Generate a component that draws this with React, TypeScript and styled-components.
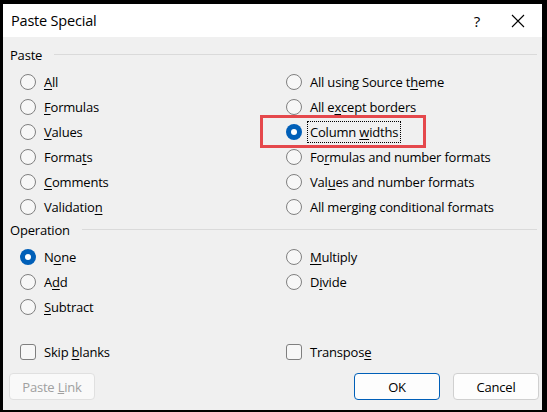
import React from "react";
import styled, { createGlobalStyle } from "styled-components";

const GlobalStyle = createGlobalStyle`
  html, body {
    margin: 0;
    padding: 0;
    background: #000;
  }
  body {
    font-family: "Open Sans", "Noto Sans", sans-serif;
  }
`;

const Window = styled.div`
  box-sizing: border-box;
  width: 547px;
  height: 412px;
  border-style: solid;
  border-color: #000;
  border-width: 4px 5px 2px 3px;
  display: flex;
  flex-direction: column;
  background: #f0f0f0;
  color: #000;
  font-size: 13px;
  letter-spacing: -0.2px;
`;

const TitleBar = styled.div`
  height: 33px;
  flex: none;
  background: #fff;
  display: flex;
  align-items: center;
  padding-left: 8px;
`;

const Title = styled.div`
  flex: 1;
  font-size: 14.5px;
  letter-spacing: -0.2px;
  color: #000;
`;

const TitleButton = styled.div<{ $w: number }>`
  width: ${(p) => p.$w}px;
  height: 33px;
  display: flex;
  align-items: center;
  justify-content: center;
  font-size: 15px;
  color: #000;
`;

const Body = styled.div`
  flex: 1;
  display: flex;
  flex-direction: column;
  padding: 7px 5px 0 7px;
`;

const GroupHeader = styled.div<{ $mt?: number }>`
  height: 21px;
  display: flex;
  align-items: center;
  gap: 12px;
  margin-top: ${(p) => p.$mt ?? 0}px;
  &::after {
    content: "";
    flex: 1;
    height: 1px;
    background: #dadada;
  }
`;

const OptionGrid = styled.div<{ $mt?: number }>`
  display: grid;
  grid-template-columns: 266px 1fr;
  grid-auto-flow: column;
  grid-template-rows: repeat(var(--rows), 25px);
  margin-left: 10px;
  margin-top: ${(p) => p.$mt ?? 4}px;
`;

const Option = styled.div`
  position: relative;
  display: flex;
  align-items: center;
  gap: 6px;
  height: 25px;
`;

const Radio = styled.span<{ $checked?: boolean }>`
  box-sizing: border-box;
  width: 16px;
  height: 16px;
  flex: none;
  border-radius: 50%;
  display: flex;
  align-items: center;
  justify-content: center;
  border: ${(p) => (p.$checked ? "none" : "1px solid #808080")};
  background: ${(p) => (p.$checked ? "#005fb8" : "#f7f7f7")};
  &::after {
    content: "";
    display: ${(p) => (p.$checked ? "block" : "none")};
    width: 6px;
    height: 6px;
    border-radius: 50%;
    background: #fff;
  }
`;

const Checkbox = styled.span`
  box-sizing: border-box;
  width: 16px;
  height: 16px;
  flex: none;
  border-radius: 3px;
  border: 1px solid #7f7f7f;
  background: #f7f7f7;
`;

const Label = styled.span<{ $focus?: boolean }>`
  padding: 1px 2px;
  line-height: 18px;
  white-space: nowrap;
  outline: ${(p) => (p.$focus ? "1px dotted #000" : "none")};
  u {
    text-decoration-thickness: 1px;
    text-underline-offset: 2px;
  }
`;

const Highlight = styled.div`
  position: absolute;
  left: -26px;
  top: -4px;
  width: 166px;
  height: 33px;
  box-sizing: border-box;
  border: 3px solid #e5484c;
  pointer-events: none;
`;

const CheckRow = styled.div`
  display: grid;
  grid-template-columns: 266px 1fr;
  margin: 20px 0 0 10px;
`;

const ButtonRow = styled.div`
  display: flex;
  align-items: center;
  margin: 9px -2px 0 -1px;
`;

const Button = styled.button<{ $variant?: "default" | "primary" | "disabled" }>`
  box-sizing: border-box;
  width: 86px;
  height: 27px;
  border-radius: 4px;
  font-family: inherit;
  font-size: 13px;
  letter-spacing: -0.2px;
  padding: 0;
  background: ${(p) => (p.$variant === "disabled" ? "#f9f9f9" : "#fdfdfd")};
  color: ${(p) => (p.$variant === "disabled" ? "#a0a0a0" : "#000")};
  border: ${(p) =>
    p.$variant === "primary"
      ? "1.5px solid #005fb8"
      : p.$variant === "disabled"
      ? "1px solid #e0e0e0"
      : "1px solid #d0d0d0"};
  & + & {
    margin-left: 13px;
  }
`;

const Spacer = styled.div`
  flex: 1;
`;

type Opt = { pre: string; key: string; post: string; checked?: boolean; focus?: boolean };

const pasteOpts: Opt[] = [
  { pre: "", key: "A", post: "ll" },
  { pre: "", key: "F", post: "ormulas" },
  { pre: "", key: "V", post: "alues" },
  { pre: "Forma", key: "t", post: "s" },
  { pre: "", key: "C", post: "omments" },
  { pre: "Validatio", key: "n", post: "" },
  { pre: "All using Source t", key: "h", post: "eme" },
  { pre: "All e", key: "x", post: "cept borders" },
  { pre: "Column ", key: "w", post: "idths", checked: true, focus: true },
  { pre: "Fo", key: "r", post: "mulas and number formats" },
  { pre: "Val", key: "u", post: "es and number formats" },
  { pre: "All mer", key: "g", post: "ing conditional formats" },
];

const opOpts: (Opt | null)[] = [
  { pre: "N", key: "o", post: "ne", checked: true },
  { pre: "A", key: "d", post: "d" },
  { pre: "", key: "S", post: "ubtract" },
  { pre: "", key: "M", post: "ultiply" },
  { pre: "D", key: "i", post: "vide" },
  null,
];

function OptionItem({ o }: { o: Opt | null }) {
  if (!o) return <Option />;
  return (
    <Option>
      <Radio $checked={o.checked} />
      <Label $focus={o.focus}>
        {o.pre}
        <u>{o.key}</u>
        {o.post}
      </Label>
      {o.focus && <Highlight />}
    </Option>
  );
}

export default function App() {
  return (
    <>
      <GlobalStyle />
      <Window>
        <TitleBar>
          <Title>Paste Special</Title>
          <TitleButton $w={34}>?</TitleButton>
          <TitleButton $w={48}>
            <svg width="14" height="14" viewBox="0 0 14 14">
              <path d="M1 1 L13 13 M13 1 L1 13" stroke="#000" strokeWidth="1.1" fill="none" />
            </svg>
          </TitleButton>
        </TitleBar>
        <Body>
          <GroupHeader>Paste</GroupHeader>
          <OptionGrid style={{ ["--rows" as string]: 6 }}>
            {pasteOpts.map((o, i) => (
              <OptionItem key={i} o={o} />
            ))}
          </OptionGrid>
          <GroupHeader>Operation</GroupHeader>
          <OptionGrid style={{ ["--rows" as string]: 3 }}>
            {opOpts.map((o, i) => (
              <OptionItem key={i} o={o} />
            ))}
          </OptionGrid>
          <CheckRow>
            <Option>
              <Checkbox />
              <Label>
                Skip <u>b</u>lanks
              </Label>
            </Option>
            <Option>
              <Checkbox />
              <Label>
                Transpos<u>e</u>
              </Label>
            </Option>
          </CheckRow>
          <ButtonRow>
            <Button $variant="disabled">
              Paste <u>L</u>ink
            </Button>
            <Spacer />
            <Button $variant="primary">OK</Button>
            <Button>Cancel</Button>
          </ButtonRow>
        </Body>
      </Window>
    </>
  );
}
